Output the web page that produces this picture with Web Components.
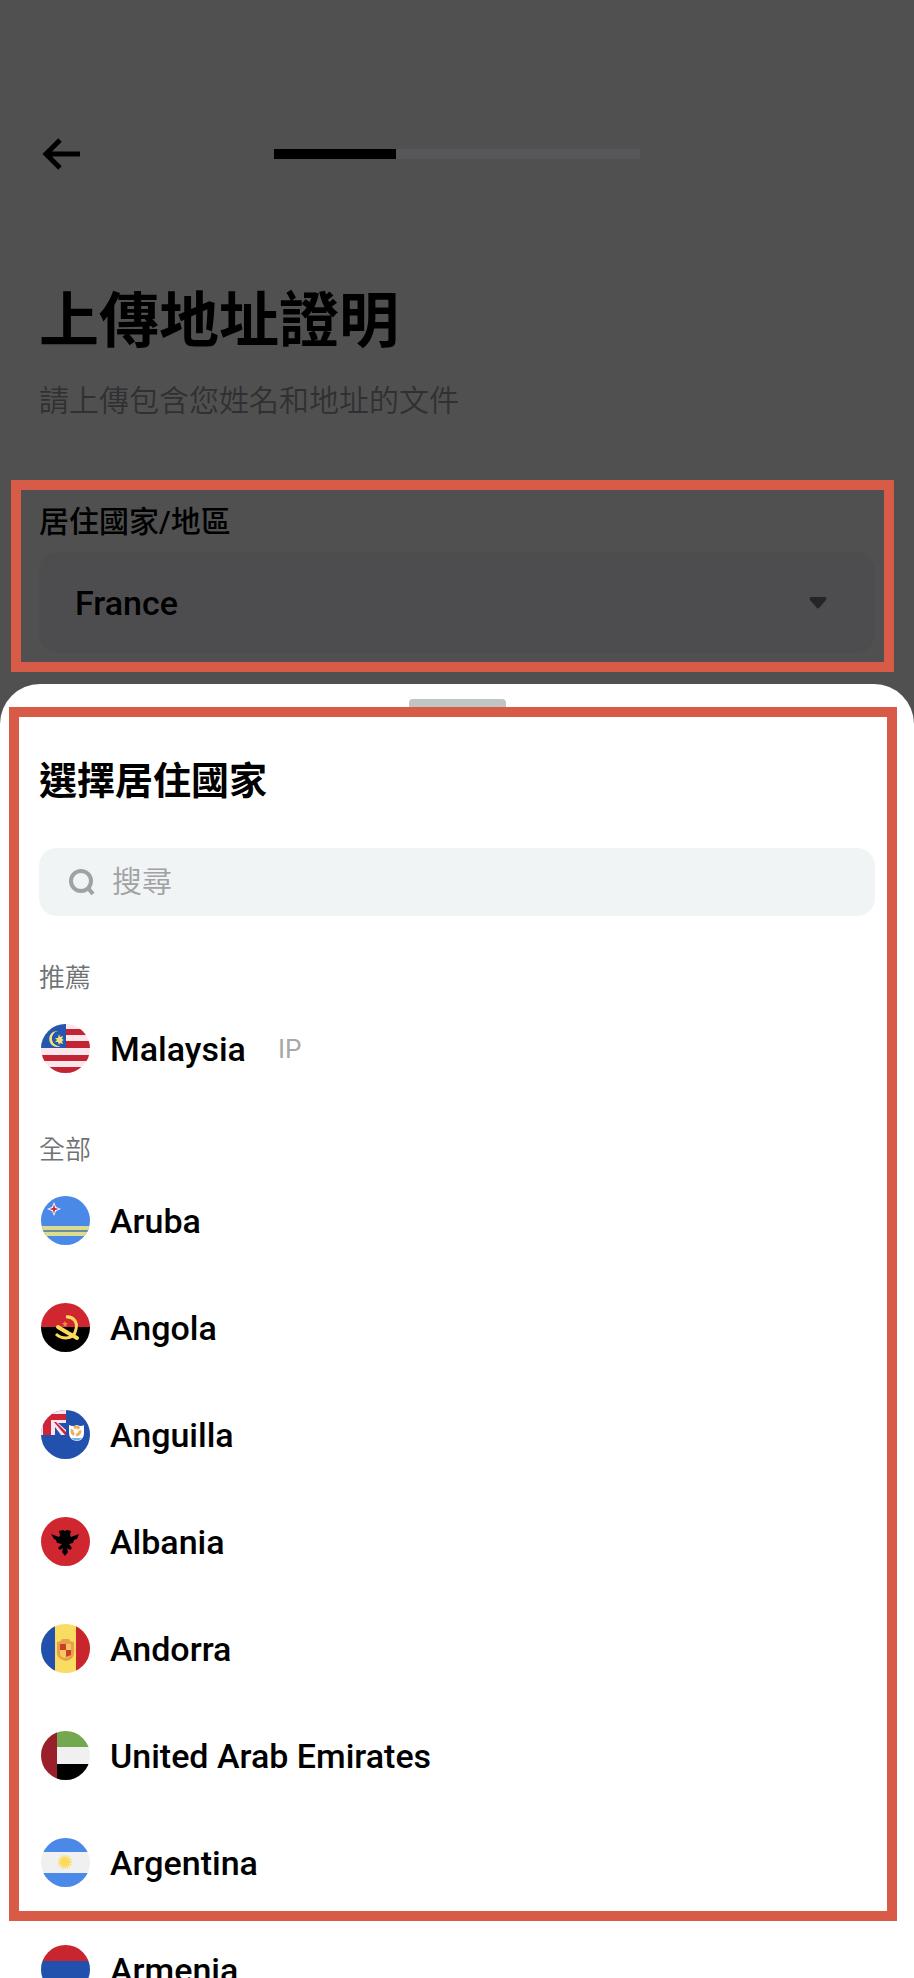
<!DOCTYPE html>
<html lang="zh-Hant">
<head>
<meta charset="utf-8">
<meta name="viewport" content="width=device-width, initial-scale=1">
<title>上傳地址證明</title>
<style>
  body {
    margin: 0;
    font-family: Roboto, "Noto Sans CJK TC", sans-serif;
    color: #000;
    background: #505050;
  }
</style>
</head>
<body>
<address-page>
  <top-bar slot="top" value="1" max="3"></top-bar>
  <page-heading slot="top">
    上傳地址證明
    <span slot="sub">請上傳包含您姓名和地址的文件</span>
  </page-heading>
  <mark-frame slot="top" class="field">
    <country-select></country-select>
  </mark-frame>

  <bottom-sheet slot="sheet">
    <mark-frame class="list">
      <sheet-title>選擇居住國家</sheet-title>
      <search-box></search-box>
      <country-group>
        推薦
        <country-row slot="rows" flag="my" note="IP">Malaysia</country-row>
      </country-group>
      <country-group>
        全部
        <country-row slot="rows" flag="aw">Aruba</country-row>
        <country-row slot="rows" flag="ao">Angola</country-row>
        <country-row slot="rows" flag="ai">Anguilla</country-row>
        <country-row slot="rows" flag="al">Albania</country-row>
        <country-row slot="rows" flag="ad">Andorra</country-row>
        <country-row slot="rows" flag="ae">United Arab Emirates</country-row>
        <country-row slot="rows" flag="ar">Argentina</country-row>
      </country-group>
    </mark-frame>
    <country-row class="next" flag="am">Armenia</country-row>
  </bottom-sheet>
</address-page>

<script>
// Flags, drawn on a 49 x 49 field and clipped to a circle
const flags = {
  my: `
    <path fill="#fbe6ee" d="M0 0h49v49H0z"/>
    <path fill="#c32434" d="M24 5h25v6H24zM24 17h25v7H24zM0 31h49v6H0zM0 43h49v6H0z"/>
    <path fill="#2457ad" d="M0 0h25v24H0z"/>
    <path fill="#f5e27a" d="M17 7a8 8 0 1 0 3 15a7 7 0 1 1-3-15z"/>
    <path fill="#f5e27a" d="M18 10l1 3 3-1-1 3 2 1-2 1 1 3-3-1-1 2-1-3-3 0 2-2-2-2 3 0z"/>`,
  aw: `
    <path fill="#4a89e8" d="M0 0h49v49H0z"/>
    <path fill="#dcdc90" d="M0 30h49v4H0zM0 36h49v4H0z"/>
    <path fill="#6c8f9b" d="M0 34h49v2H0z"/>
    <path fill="#fff" d="M13 6l2 5 5 2-5 2-2 5-2-5-5-2 5-2z"/>
    <path fill="#c5203f" d="M13 8l1 4 4 1-4 1-1 4-1-4-4-1 4-1z"/>`,
  ao: `
    <path fill="#d02630" d="M0 0h49v25H0z"/>
    <path fill="#000" d="M0 24h49v25H0z"/>
    <g fill="none" stroke="#fcd95b" stroke-width="3">
      <path d="M25 14c7-1 12 5 10 12-1 6-5 9-10 9-4 0-7-1-10-4"/>
      <path d="M17 24l10 6 9 5" stroke-width="4" stroke-linecap="round"/>
    </g>
    <path fill="#f08a3c" d="M24 18l1 2h2l-2 2 1 2-2-1-2 1 1-2-2-2h2z"/>`,
  ai: `
    <path fill="#2150ad" d="M0 0h49v49H0z"/>
    <path fill="#fbe6ee" d="M0 0h25v25H0z"/>
    <path fill="#cf2436" d="M25 4v6H10v15H2V12l8-8z"/>
    <path fill="#2150ad" d="M17 13h8v7zM14 17v8h6z"/>
    <path fill="#cf2436" d="M13 12h2l10 10v3h-1z"/>
    <path fill="#fff" d="M28 15q4 2 8 0q4 2 7 0v8q0 7-7 8q-8-1-8-8z"/>
    <path fill="#6fb2f0" d="M30 28h11q-5 5-11 0z"/>
    <circle cx="35" cy="21" r="4" fill="none" stroke="#eeb05a" stroke-width="3" stroke-dasharray="6 2"/>`,
  al: `
    <path fill="#d02630" d="M0 0h49v49H0z"/>
    <path fill="#000" d="M24 14l-2-1-4 1 1 4-1 2-8-3 3 5 2 1 1 3 5 1-4 4 2 2 3-2-1 4 3 4 3-4-1-4 3 2 2-2-3-4 4-1 1-3 3-1 2-5-8 3-1-2 1-4-4-1z"/>`,
  ad: `
    <path fill="#f9dc62" d="M0 0h49v49H0z"/>
    <path fill="#2150ad" d="M0 0h14v49H0z"/>
    <path fill="#c9252f" d="M35 0h14v49H35z"/>
    <path fill="#e9a04a" d="M16 18q4 0 5-3h7q1 3 5 3v11q0 6-8 8q-9-2-9-8z"/>
    <path fill="#f5c95a" d="M19 20h11v10q-1 3-6 4q-5-1-5-4z"/>
    <path fill="#cf3a30" d="M19 20h6v6h-6zM25 26h5v5l-5 2z"/>`,
  ae: `
    <path fill="#f0f0f0" d="M0 0h49v49H0z"/>
    <path fill="#73a850" d="M16 0h33v16H16z"/>
    <path fill="#000" d="M16 33h33v16H16z"/>
    <path fill="#991f2b" d="M0 0h16v49H0z"/>`,
  ar: `
    <path fill="#f0f0f0" d="M0 0h49v49H0z"/>
    <path fill="#4a89e8" d="M0 0h49v14H0zM0 35h49v14H0z"/>
    <circle cx="24" cy="24" r="5" fill="#fcd95b"/>
    <circle cx="24" cy="24" r="6" fill="none" stroke="#fcd95b" stroke-width="2" stroke-dasharray="1 1"/>`,
  am: `
    <path fill="#c9252f" d="M0 0h49v16H0z"/>
    <path fill="#2150ad" d="M0 16h49v17H0z"/>
    <path fill="#f0a030" d="M0 33h49v16H0z"/>`
};

// Attaches an open shadow root with the given markup
function render(host, html) {
  const template = document.createElement('template');
  template.innerHTML = html;
  host.attachShadow({ mode: 'open' }).appendChild(template.content.cloneNode(true));
}

class AddressPage extends HTMLElement {
  constructor() {
    super();
    render(this, `
      <style>
        :host {
          display: flex;
          flex-direction: column;
          height: 100vh;
          overflow: hidden;
        }
        header { flex: none; }
        main {
          flex: 1;
          min-height: 0;
          display: flex;
        }
        ::slotted(mark-frame) {
          margin: 59px 20px 12px 11px;
          padding: 8px 9px 9px 18px;
        }
        ::slotted(bottom-sheet) { flex: 1; }
      </style>
      <header><slot name="top"></slot></header>
      <main><slot name="sheet"></slot></main>
    `);
  }
}

class TopBar extends HTMLElement {
  connectedCallback() {
    if (this.shadowRoot) return;
    const value = Number(this.getAttribute('value'));
    const max = Number(this.getAttribute('max'));
    render(this, `
      <style>
        :host {
          display: grid;
          grid-template-columns: 3fr 4fr 3fr;
          align-items: center;
          padding-top: 132px;
        }
        button {
          justify-self: start;
          margin-left: 39px;
          padding: 0;
          border: 0;
          background: none;
          line-height: 0;
        }
        .track {
          height: 10px;
          background: #57575a;
        }
        .done {
          height: 10px;
          background: #000;
        }
      </style>
      <button type="button" aria-label="返回">
        <svg width="44" height="44" viewBox="0 0 44 44" fill="none" stroke="#000" stroke-width="5">
          <path d="M41 22H8M21 8L7 22l14 14"/>
        </svg>
      </button>
      <div class="track" role="progressbar" aria-valuenow="${value}" aria-valuemax="${max}">
        <div class="done" style="width: calc(100% * ${value} / ${max})"></div>
      </div>
    `);
  }
}

class PageHeading extends HTMLElement {
  constructor() {
    super();
    render(this, `
      <style>
        :host {
          display: block;
          padding: 102px 39px 0;
        }
        h1 {
          margin: 0;
          font-size: 60px;
          line-height: 88px;
          font-weight: 700;
        }
        p {
          margin: 15px 0 0;
          font-size: 30px;
          line-height: 40px;
          font-weight: 350;
          color: #303033;
        }
      </style>
      <h1><slot></slot></h1>
      <p><slot name="sub"></slot></p>
    `);
  }
}

// Red frame that points out a part of the screen
class MarkFrame extends HTMLElement {
  constructor() {
    super();
    render(this, `
      <style>
        :host {
          display: block;
          border: 10px solid #d85b48;
        }
      </style>
      <slot></slot>
    `);
  }
}

class CountrySelect extends HTMLElement {
  constructor() {
    super();
    render(this, `
      <style>
        :host { display: block; }
        label {
          display: block;
          font-size: 30px;
          line-height: 48px;
          font-weight: 500;
        }
        .box {
          display: grid;
          align-items: center;
          margin-top: 6px;
        }
        select, svg { grid-area: 1 / 1; }
        select {
          appearance: none;
          width: 100%;
          height: 101px;
          padding: 0 36px;
          border: 0;
          border-radius: 20px;
          background: #4d4d4f;
          color: #000;
          font: 500 34px Roboto, sans-serif;
        }
        svg {
          justify-self: end;
          margin-right: 48px;
          pointer-events: none;
        }
      </style>
      <label for="country">居住國家/地區</label>
      <div class="box">
        <select id="country"><option>France</option></select>
        <svg width="18" height="14" viewBox="0 0 18 14">
          <path fill="#252527" d="M2 1h14q2 0 1 3l-7 8q-1 1-2 0L1 4Q0 1 2 1z"/>
        </svg>
      </div>
    `);
  }
}

class BottomSheet extends HTMLElement {
  constructor() {
    super();
    render(this, `
      <style>
        :host {
          display: flex;
          flex-direction: column;
          overflow: hidden;
          border-radius: 40px 40px 0 0;
          background: #fff;
        }
        .handle {
          flex: none;
          align-self: center;
          width: 97px;
          height: 8px;
          margin-top: 15px;
          border-radius: 4px 4px 0 0;
          background: #bfc4c4;
        }
        ::slotted(.list) {
          flex: none;
          margin: 0 17px 0 9px;
          padding: 34px 12px 24px 20px;
        }
        ::slotted(.next) {
          flex: none;
          margin: 24px 39px 0;
        }
      </style>
      <div class="handle"></div>
      <slot></slot>
    `);
  }
}

class SheetTitle extends HTMLElement {
  constructor() {
    super();
    render(this, `
      <style>
        :host { display: block; }
        h2 {
          margin: 0;
          font-size: 38px;
          line-height: 60px;
          font-weight: 700;
        }
      </style>
      <h2><slot></slot></h2>
    `);
  }
}

class SearchBox extends HTMLElement {
  constructor() {
    super();
    render(this, `
      <style>
        :host { display: block; }
        label {
          display: flex;
          align-items: center;
          gap: 16px;
          height: 68px;
          margin-top: 37px;
          padding: 0 29px;
          border-radius: 18px;
          background: #f0f4f5;
        }
        svg { flex: none; }
        input {
          flex: 1;
          min-width: 0;
          padding: 0;
          border: 0;
          outline: 0;
          background: none;
          color: #000;
          font-family: inherit;
          font-size: 30px;
          line-height: 40px;
          font-weight: 350;
        }
        input::placeholder { color: #a0a2a3; }
      </style>
      <label>
        <svg width="28" height="28" viewBox="0 0 28 28" fill="none" stroke="#9fa1a2" stroke-width="4">
          <circle cx="13" cy="13" r="10"/>
          <path d="M20 20l5 6"/>
        </svg>
        <input type="search" placeholder="搜尋" aria-label="搜尋">
      </label>
    `);
  }
}

class CountryGroup extends HTMLElement {
  constructor() {
    super();
    render(this, `
      <style>
        :host {
          display: block;
          padding-top: 42px;
        }
        :host(:not(:last-child)) { padding-bottom: 15px; }
        h3 {
          margin: 0 0 26px;
          font-size: 26px;
          line-height: 40px;
          font-weight: 350;
          color: #707374;
        }
        .rows {
          display: flex;
          flex-direction: column;
          gap: 58px;
        }
      </style>
      <h3><slot></slot></h3>
      <div class="rows"><slot name="rows"></slot></div>
    `);
  }
}

class CountryRow extends HTMLElement {
  connectedCallback() {
    if (this.shadowRoot) return;
    const note = this.getAttribute('note');
    render(this, `
      <style>
        :host { display: block; }
        button {
          display: flex;
          align-items: center;
          width: 100%;
          height: 49px;
          padding: 0 2px;
          border: 0;
          background: none;
          color: #000;
          text-align: left;
          font: 500 34px/48px Roboto, sans-serif;
        }
        svg {
          flex: none;
          margin-right: 20px;
          border-radius: 50%;
        }
        small {
          margin-left: 32px;
          font-size: 26px;
          font-weight: 400;
          color: #a8a8a8;
        }
      </style>
      <button type="button">
        <svg width="49" height="49" viewBox="0 0 49 49">${flags[this.getAttribute('flag')]}</svg>
        <span><slot></slot></span>
        ${note ? `<small>${note}</small>` : ''}
      </button>
    `);
  }
}

customElements.define('address-page', AddressPage);
customElements.define('top-bar', TopBar);
customElements.define('page-heading', PageHeading);
customElements.define('mark-frame', MarkFrame);
customElements.define('country-select', CountrySelect);
customElements.define('bottom-sheet', BottomSheet);
customElements.define('sheet-title', SheetTitle);
customElements.define('search-box', SearchBox);
customElements.define('country-group', CountryGroup);
customElements.define('country-row', CountryRow);
</script>
</body>
</html>
